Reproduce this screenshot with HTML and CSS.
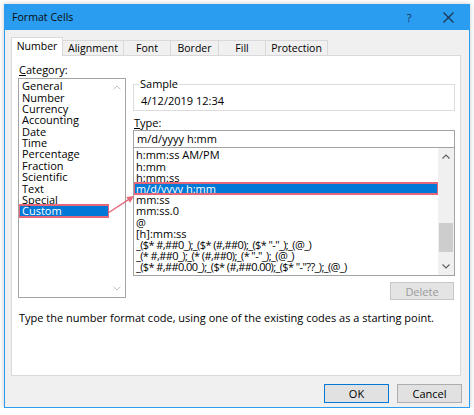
FILE: index.html
```html
<!DOCTYPE html>
<html>
<head>
<meta charset="utf-8">
<title>Format Cells</title>
<link rel="stylesheet" href="styles.css">
</head>
<body>
<div class="window">
  <div class="titlebar">
    <span class="title">Format Cells</span>
    <span class="tb-help">?</span>
    <span class="tb-close"><svg width="11" height="11" viewBox="0 0 11 11"><path d="M0.5 0.5L10.5 10.5M10.5 0.5L0.5 10.5" stroke="#1c3049" stroke-width="1.1" fill="none"/></svg></span>
  </div>
  <div class="client">
    <div class="tabs">
      <div class="tab active t-number">Number</div>
      <div class="tab t-align">Alignment</div>
      <div class="tab t-font">Font</div>
      <div class="tab t-border">Border</div>
      <div class="tab t-fill">Fill</div>
      <div class="tab t-prot">Protection</div>
    </div>
    <div class="panel">
      <div class="cols">
        <div class="leftcol">
          <div class="label"><u>C</u>ategory:</div>
          <div class="listbox cat">
            <div class="items">
              <div class="item">General</div>
              <div class="item">Number</div>
              <div class="item">Currency</div>
              <div class="item">Accounting</div>
              <div class="item">Date</div>
              <div class="item">Time</div>
              <div class="item">Percentage</div>
              <div class="item">Fraction</div>
              <div class="item">Scientific</div>
              <div class="item">Text</div>
              <div class="item">Special</div>
              <div class="item sel">Custom</div>
            </div>
            <div class="vscroll plain">
              <div class="sbtn"><svg width="8" height="5" viewBox="0 0 8 5"><path d="M0.5 4.5L4 1L7.5 4.5" stroke="#c4c4c4" stroke-width="1" fill="none"/></svg></div>
              <div class="track"></div>
              <div class="sbtn"><svg width="8" height="5" viewBox="0 0 8 5"><path d="M0.5 0.5L4 4L7.5 0.5" stroke="#c4c4c4" stroke-width="1" fill="none"/></svg></div>
            </div>
          </div>
        </div>
        <div class="rightcol">
          <fieldset class="sample">
            <legend>Sample</legend>
            <div class="sample-val">4/12/2019 12:34</div>
          </fieldset>
          <div class="label type-label"><u>T</u>ype:</div>
          <div class="input">m/d/yyyy h:mm</div>
          <div class="listbox types">
            <div class="items">
              <div class="item">h:mm:ss AM/PM</div>
              <div class="item">h:mm</div>
              <div class="item">h:mm:ss</div>
              <div class="item sel">m/d/yyyy h:mm</div>
              <div class="item">mm:ss</div>
              <div class="item">mm:ss.0</div>
              <div class="item">@</div>
              <div class="item">[h]:mm:ss</div>
              <div class="item code">_($* #,##0_);_($* (#,##0);_($* "-"_);_(@_)</div>
              <div class="item code">_(* #,##0_);_(* (#,##0);_(* "-"_);_(@_)</div>
              <div class="item code">_($* #,##0.00_);_($* (#,##0.00);_($* "-"??_);_(@_)</div>
            </div>
            <div class="vscroll">
              <div class="sbtn"><svg width="8" height="5" viewBox="0 0 8 5"><path d="M0.5 4.5L4 1L7.5 4.5" stroke="#606060" stroke-width="1.2" fill="none"/></svg></div>
              <div class="track"><div class="thumb"></div></div>
              <div class="sbtn"><svg width="8" height="5" viewBox="0 0 8 5"><path d="M0.5 0.5L4 4L7.5 0.5" stroke="#606060" stroke-width="1.2" fill="none"/></svg></div>
            </div>
          </div>
          <div class="delete-row"><button class="btn disabled">Delete</button></div>
        </div>
      </div>
      <div class="desc">Type the number format code, using one of the existing codes as a starting point.</div>
      <svg class="arrow" width="42" height="28" viewBox="0 0 42 28">
        <path d="M13 23L33.5 9.6" stroke="#e5677a" stroke-width="1.4" fill="none"/>
        <polygon points="39,6 35.05,12.76 31.23,6.9" fill="#e5677a"/>
      </svg>
    </div>
    <div class="buttons">
      <button class="btn default">OK</button>
      <button class="btn">Cancel</button>
    </div>
  </div>
</div>
</body>
</html>
```
FILE: styles.css
```css
* { box-sizing: border-box; }
body {
  margin: 0;
  background: #ffffff;
  font-family: "Open Sans", "Noto Sans", sans-serif;
  font-size: 11px;
  color: #000;
}
.window {
  margin: 4px 0 0 4px;
  width: 466px;
  height: 404px;
  border: 1px solid #2a9df0;
  border-top: 0;
  background: #f0f0f0;
  display: flex;
  flex-direction: column;
  box-shadow: 0 0 5px rgba(0,0,0,0.22);
}
.titlebar {
  height: 26px;
  flex: none;
  background: #2a9df0;
  display: flex;
  align-items: center;
  padding: 0 7px 0 7px;
}
.title { font-size: 10.6px; color: #0b0b0b; }
.tb-help {
  margin-left: auto;
  width: 20px;
  text-align: center;
  font-size: 11px;
  color: #1c3049;
}
.tb-close {
  width: 28px;
  margin-left: 15px;
  display: flex;
  justify-content: center;
}
.client {
  flex: 1;
  display: flex;
  flex-direction: column;
  padding: 7px 8px 0 6px;
}
.tabs {
  display: flex;
  align-items: flex-end;
  height: 18px;
  font-size: 10.5px;
}
.tab {
  height: 15px;
  border-top: 1px solid #d9d9d9;
  border-right: 1px solid #d9d9d9;
  text-align: center;
  line-height: 14px;
  background: #f0f0f0;
}
.tab.active {
  height: 19px;
  margin-bottom: -1px;
  background: #fff;
  border-left: 1px solid #d9d9d9;
  line-height: 17px;
  position: relative;
  z-index: 1;
}
.t-number { width: 52px; }
.t-align { width: 61px; }
.t-font { width: 47px; }
.t-border { width: 48px; }
.t-fill { width: 47px; }
.t-prot { width: 62px; }
.panel {
  flex: none;
  height: 321px;
  background: #fff;
  border: 1px solid #d9d9d9;
  padding: 8px 5px 0 6px;
  position: relative;
}
.cols { display: flex; gap: 7px; }
.leftcol { width: 108px; flex: none; }
.rightcol { flex: 1; min-width: 0; padding-top: 14px; }
.label { line-height: 12px; height: 12px; margin-left: 1px; }
.listbox {
  display: flex;
  border: 1px solid #a3a3a3;
  background: #fff;
  overflow: hidden;
}
.listbox.cat { height: 220px; margin-top: 2px; }
.items { flex: 1; min-width: 0; overflow: hidden; white-space: nowrap; }
.cat .items { padding-top: 1.3px; }
.cat .item { line-height: 11.36px; height: 11.36px; padding-left: 3px; }
.types .items { padding-top: 1.4px; }
.types .item { line-height: 11.2px; height: 11.2px; padding-left: 2px; }
.types .item.code { letter-spacing: -0.6px; }
.item.sel {
  background: #0078d7;
  color: #fff;
  outline: 2px solid #e5677a;
  outline-offset: -1px;
}
.vscroll {
  width: 16px;
  flex: none;
  display: flex;
  flex-direction: column;
  background: #f0f0f0;
}
.vscroll.plain { background: #fff; }
.sbtn {
  height: 17px;
  flex: none;
  display: flex;
  align-items: center;
  justify-content: center;
}
.track { flex: 1; }
.thumb {
  margin: 58px 1px 0 1px;
  height: 29px;
  background: #cdcdcd;
}
.sample {
  margin: 0;
  min-width: 0;
  border: 1px solid #dcdcdc;
  padding: 5px 6px 3px 5px;
}
.sample legend {
  padding: 0 1px;
  line-height: 12px;
}
.sample-val { line-height: 12px; margin-left: 2px; }
.type-label { margin-top: 6px; }
.input {
  margin-top: 1px;
  height: 18px;
  border: 1px solid #a3a3a3;
  line-height: 16px;
  padding-left: 3px;
}
.listbox.types { height: 128px; border-top: 0; }
.delete-row {
  display: flex;
  justify-content: flex-end;
  margin-top: 6px;
}
.btn {
  font-family: inherit;
  font-size: 11px;
  color: #000;
  background: #e1e1e1;
  border: 1px solid #adadad;
  height: 19px;
  width: 65px;
  padding: 0;
  margin: 0;
}
.btn.disabled {
  width: 64px;
  height: 18px;
  margin-right: 1px;
  background: #e4e4e4;
  border-color: #c6c6c6;
  color: #9a9a9a;
}
.btn.default { border-color: #0078d7; }
.desc { margin-top: 12px; line-height: 12px; margin-left: 1px; white-space: nowrap; }
.arrow {
  position: absolute;
  left: 83px;
  top: 134px;
  pointer-events: none;
}
.buttons {
  display: flex;
  justify-content: flex-end;
  gap: 8px;
  margin-top: 8px;
  margin-right: -1px;
}
```
